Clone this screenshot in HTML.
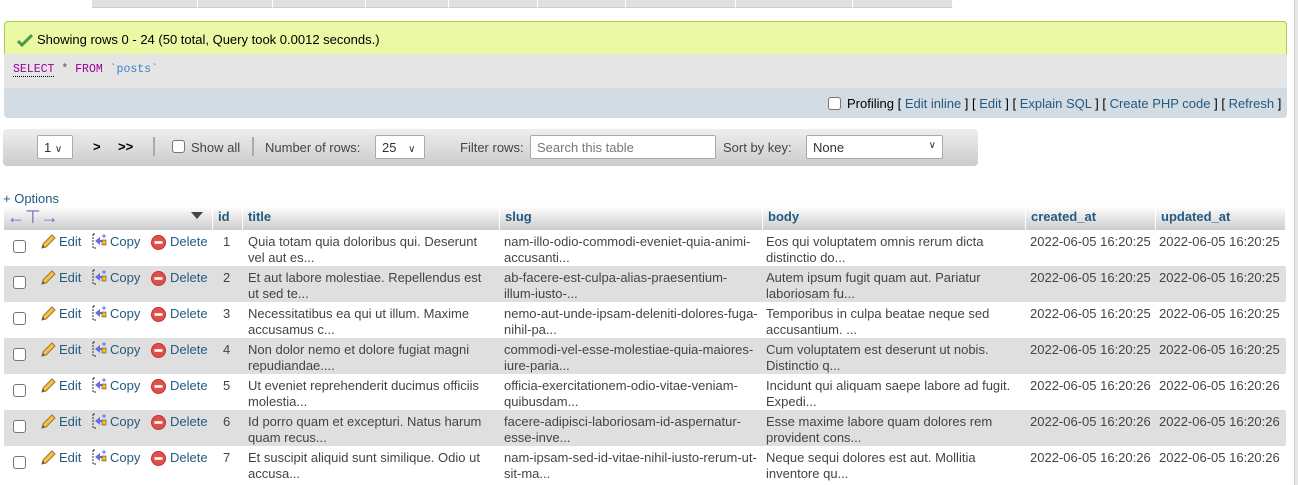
<!DOCTYPE html>
<html><head><meta charset="utf-8"><style>
*{box-sizing:border-box}
body{margin:0;width:1298px;height:485px;overflow:hidden;background:#fff;font-family:"Liberation Sans",sans-serif;font-size:13px;color:#444;position:relative}
a{color:#235a81;text-decoration:none}
.tab{position:absolute;top:0;height:8px;background:#e0e0e0;border-right:1px solid #fff;border-bottom:1px solid #ccc}
.abs{position:absolute}
.hdr{position:absolute;top:206px;height:24px;background:linear-gradient(#fff,#ccc);font-weight:bold;color:#235a81;padding:3px 4px;border-right:1px solid #fff}
.row{position:absolute;left:4px;width:1282px;height:36px}
.c{position:absolute;top:4px;line-height:16px;font-size:13px;color:#444}
.cb{position:absolute;width:13px;height:13px;border:1px solid #767676;border-radius:3px;background:#fff}
.lnk{color:#235a81}
.sel{position:absolute;background:#fff;border:1px solid #aaa;border-radius:2px;font-size:13px;color:#333;padding:4px 6px}
</style></head><body>
<div class="tab" style="left:92px;width:106px"></div>
<div class="tab" style="left:198px;width:75px"></div>
<div class="tab" style="left:273px;width:93px"></div>
<div class="tab" style="left:366px;width:83px"></div>
<div class="tab" style="left:449px;width:89px"></div>
<div class="tab" style="left:538px;width:88px"></div>
<div class="tab" style="left:626px;width:110px"></div>
<div class="tab" style="left:736px;width:117px"></div>
<div class="tab" style="left:853px;width:100px"></div>
<div class="abs" style="left:1294px;top:0;width:4px;height:485px;background:#e8e8e8;border-left:1px solid #ccc"></div>

<div class="abs" style="left:4px;top:21px;width:1283px;height:34px;background:#ebf8a4;border:1px solid #a2d246;border-bottom:none;border-radius:4px 4px 0 0"></div>
<svg class="abs" style="left:17px;top:33px" width="16" height="14" viewBox="0 0 16 14"><path d="M1 8 L5 12 L15 2" stroke="#4a9a4a" stroke-width="3" fill="none"/></svg>
<div class="abs" style="left:37px;top:32px;font-size:13px;color:#000">Showing rows 0 - 24 (50 total, Query took 0.0012 seconds.)</div>
<div class="abs" style="left:4px;top:54px;width:1283px;height:34px;background:#e5e5e5"></div>
<div class="abs" style="left:13px;top:63px;font-family:'Liberation Mono',monospace;font-size:11.5px"><span style="color:#990099;border-bottom:1px dotted #000">SELECT</span> <span style="color:#555">*</span> <span style="color:#990099">FROM</span> <span style="color:#3880c8">`posts`</span></div>
<div class="abs" style="left:4px;top:88px;width:1283px;height:30px;background:#d3dce3;border-radius:0 0 4px 4px"></div>
<div class="cb" style="left:828px;top:97px"></div>
<div class="abs" style="left:847px;top:96px;color:#000">Profiling [ <a>Edit inline</a> ] [ <a>Edit</a> ] [ <a>Explain SQL</a> ] [ <a>Create PHP code</a> ] [ <a>Refresh</a> ]</div>

<div class="abs" style="left:3px;top:129px;width:975px;height:37px;background:linear-gradient(#eee,#ccc);border-radius:4px"></div>
<div class="sel" style="left:37px;top:135px;width:36px;height:24px">1 <span style="font-size:10px">&#8744;</span></div>
<div class="abs" style="left:93px;top:139px;color:#000;font-weight:bold">&gt;</div>
<div class="abs" style="left:118px;top:139px;color:#000;font-weight:bold">&gt;&gt;</div>
<div class="abs" style="left:153px;top:137px;width:2px;height:19px;background:#aaa"></div>
<div class="cb" style="left:172px;top:140px"></div>
<div class="abs" style="left:191px;top:140px">Show all</div>
<div class="abs" style="left:252px;top:137px;width:2px;height:19px;background:#aaa"></div>
<div class="abs" style="left:265px;top:140px">Number of rows:</div>
<div class="sel" style="left:375px;top:135px;width:50px;height:24px">25 <span style="font-size:10px;margin-left:8px">&#8744;</span></div>
<div class="abs" style="left:460px;top:140px">Filter rows:</div>
<div class="sel" style="left:530px;top:135px;width:186px;height:24px;color:#777">Search this table</div>
<div class="abs" style="left:723px;top:140px">Sort by key:</div>
<div class="sel" style="left:806px;top:135px;width:137px;height:24px">None<span style="float:right;font-size:10px">&#8744;</span></div>

<div class="abs" style="left:3px;top:191px;color:#235a81">+ Options</div>
<div class="hdr" style="left:4px;width:209px"></div>
<div class="abs" style="left:7px;top:206px;color:#6a6ab8;font-size:18px;line-height:22px">&#8592;&#8868;&#8594;</div>
<div class="abs" style="left:191px;top:212px;width:0;height:0;border-left:6px solid transparent;border-right:6px solid transparent;border-top:7px solid #444"></div>
<div class="hdr" style="left:213px;width:30px;padding-left:5px">id</div>
<div class="hdr" style="left:243px;width:257px;padding-left:5px">title</div>
<div class="hdr" style="left:500px;width:263px;padding-left:5px">slug</div>
<div class="hdr" style="left:763px;width:263px;padding-left:5px">body</div>
<div class="hdr" style="left:1026px;width:130px;padding-left:5px">created_at</div>
<div class="hdr" style="left:1156px;width:130px;padding-left:5px">updated_at</div>

<div id="rows"></div>
<script>
var d=[
["Quia totam quia doloribus qui. Deserunt vel aut es...","nam-illo-odio-commodi-eveniet-quia-animi-accusanti...","Eos qui voluptatem omnis rerum dicta distinctio do...","25"],
["Et aut labore molestiae. Repellendus est ut sed te...","ab-facere-est-culpa-alias-praesentium-illum-iusto-...","Autem ipsum fugit quam aut. Pariatur laboriosam fu...","25"],
["Necessitatibus ea qui ut illum. Maxime accusamus c...","nemo-aut-unde-ipsam-deleniti-dolores-fuga-nihil-pa...","Temporibus in culpa beatae neque sed accusantium. ...","25"],
["Non dolor nemo et dolore fugiat magni repudiandae....","commodi-vel-esse-molestiae-quia-maiores-iure-paria...","Cum voluptatem est deserunt ut nobis. Distinctio q...","25"],
["Ut eveniet reprehenderit ducimus officiis molestia...","officia-exercitationem-odio-vitae-veniam-quibusdam...","Incidunt qui aliquam saepe labore ad fugit. Expedi...","26"],
["Id porro quam et excepturi. Natus harum quam recus...","facere-adipisci-laboriosam-id-aspernatur-esse-inve...","Esse maxime labore quam dolores rem provident cons...","26"],
["Et suscipit aliquid sunt similique. Odio ut accusa...","nam-ipsam-sed-id-vitae-nihil-iusto-rerum-ut-sit-ma...","Neque sequi dolores est aut. Mollitia inventore qu...","26"]];
var h="";
d.forEach(function(r,i){
var top=230+i*36,bg=i%2?"#dfdfdf":"#fff";
h+='<div class="row" style="top:'+top+'px;background:'+bg+'">'+
'<div class="cb" style="left:9px;top:10px"></div>'+
'<svg class="abs" style="left:36px;top:4px" width="16" height="16" viewBox="0 0 16 16"><path d="M2 14 L3 10 L12 1 L15 4 L6 13 Z" fill="#f3c44a" stroke="#a2702a"/><path d="M2 14 L3 11 L5 13Z" fill="#555"/></svg>'+
'<div class="c" style="left:55px" ><span class="lnk">Edit</span></div>'+
'<svg class="abs" style="left:87px;top:3px" width="16" height="16" viewBox="0 0 16 16"><path d="M2 1h3M2 1v14h3" stroke="#333" fill="none" stroke-dasharray="2 1"/><path d="M4 8 L9 4 L9 12Z" fill="#6a6ae0"/><path d="M8 8h3" stroke="#6a6ae0" stroke-width="2"/><rect x="11" y="7" width="4" height="5" fill="#f0c020" stroke="#333" stroke-width=".5"/><path d="M13 1v4M11 3h4" stroke="#6a6ae0"/></svg>'+
'<div class="c" style="left:106px"><span class="lnk">Copy</span></div>'+
'<svg class="abs" style="left:147px;top:5px" width="15" height="15" viewBox="0 0 15 15"><circle cx="7.5" cy="7.5" r="7" fill="#e0504a" stroke="#c03030"/><rect x="3.5" y="6.2" width="8" height="2.6" fill="#fff"/></svg>'+
'<div class="c" style="left:166px"><span class="lnk">Delete</span></div>'+
'<div class="c" style="left:219px">'+(i+1)+'</div>'+
'<div class="c" style="left:244px;width:244px">'+r[0]+'</div>'+
'<div class="c" style="left:500px;width:254px">'+r[1]+'</div>'+
'<div class="c" style="left:762px;width:250px">'+r[2]+'</div>'+
'<div class="c" style="left:1026px">2022-06-05 16:20:'+r[3]+'</div>'+
'<div class="c" style="left:1155px">2022-06-05 16:20:'+r[3]+'</div>'+
'</div>';});
document.getElementById("rows").innerHTML=h;
</script>
</body></html>
